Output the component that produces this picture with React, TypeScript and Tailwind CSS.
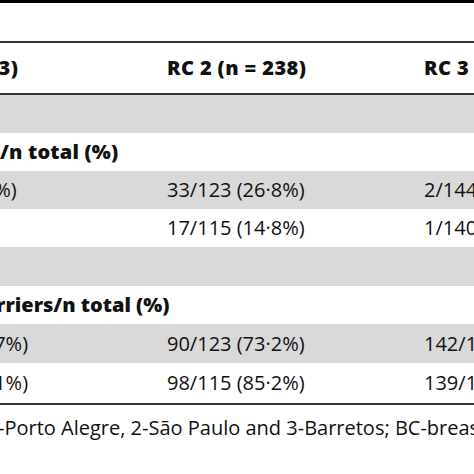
import React from "react";

const font = { fontFamily: '"Open Sans", "Liberation Sans", sans-serif' };

function DataRow({ gray, cells, h }: { gray?: boolean; cells: string[]; h: string }) {
  return (
    <div className={`flex items-center ${h} ${gray ? "bg-[#d9d9d9]" : "bg-white"}`}>
      <div className="w-[288px] shrink-0 whitespace-nowrap">{cells[0]}</div>
      <div className="w-[257px] shrink-0 whitespace-nowrap">{cells[1]}</div>
      <div className="shrink-0 whitespace-nowrap">{cells[2]}</div>
    </div>
  );
}

export default function App() {
  return (
    <div className="w-[474px] h-[474px] overflow-hidden bg-white text-[20px] text-[#111]" style={font}>
      <div className="h-[3px] bg-black" />
      <div className="h-[38px]" />
      <div className="h-[2px] bg-[#333]" />
      <div className="-ml-[121px] w-[900px]">
        <div className="flex items-center h-[50px] font-extrabold tracking-[0.4px]">
          <div className="w-[288px] shrink-0 whitespace-nowrap">RC 1 (n = 283)</div>
          <div className="w-[257px] shrink-0 whitespace-nowrap">RC 2 (n = 238)</div>
          <div className="shrink-0 whitespace-nowrap">RC 3 (n = 284)</div>
        </div>
      </div>
      <div className="h-[2px] bg-[#333]" />
      <div className="h-[38px] bg-[#d9d9d9]" />
      <div className="h-[38px] flex items-center font-extrabold tracking-[0.2px] whitespace-nowrap">
        <span className="ml-[0px]">/n total (%)</span>
      </div>
      <div className="-ml-[121px] w-[900px]">
        <DataRow gray h="h-[38px]" cells={["28/133 (21·1%)", "33/123 (26·8%)", "2/144 (1·4%)"]} />
        <DataRow h="h-[38px]" cells={["8/150 (5·3%)", "17/115 (14·8%)", "1/140 (0·7%)"]} />
      </div>
      <div className="h-[39px] bg-[#d9d9d9]" />
      <div className="h-[38px] flex items-center font-extrabold whitespace-nowrap">
        <span className="-ml-[4px]">rriers/n total (%)</span>
      </div>
      <div className="-ml-[121px] w-[900px]">
        <DataRow gray h="h-[39px]" cells={["114/133 (85·7%)", "90/123 (73·2%)", "142/144 (98·6%)"]} />
        <DataRow h="h-[40px]" cells={["136/150 (90·1%)", "98/115 (85·2%)", "139/140 (99·3%)"]} />
      </div>
      <div className="h-[2px] bg-[#333]" />
      <div className="h-[46px] flex items-center whitespace-nowrap">
        <span className="-ml-[2px]">-Porto Alegre, 2-São Paulo and 3-Barretos; BC-breast cancer</span>
      </div>
    </div>
  );
}
